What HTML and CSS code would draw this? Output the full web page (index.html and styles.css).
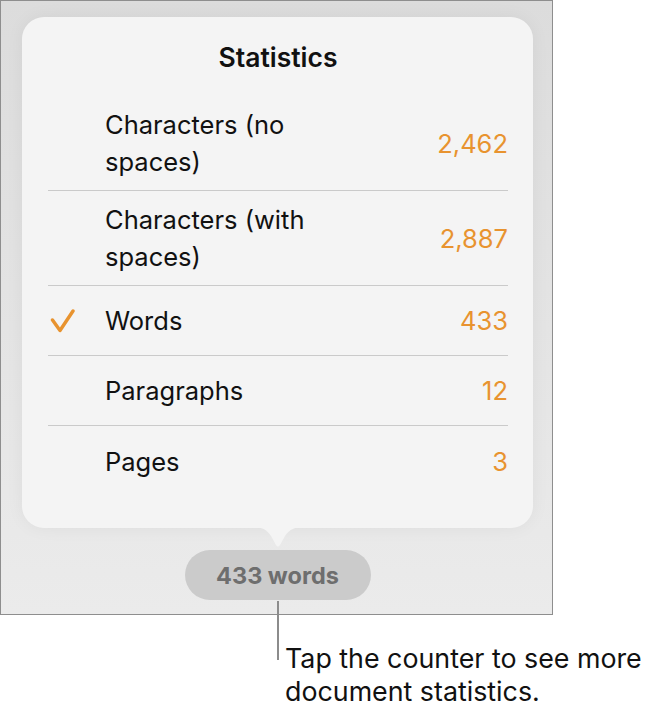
FILE: index.html
```html
<!DOCTYPE html>
<html>
<head>
<meta charset="utf-8">
<link rel="stylesheet" href="styles.css">
</head>
<body>
<div class="frame">
  <div class="card">
    <div class="title">Statistics</div>
    <div class="list">
      <div class="row"><div class="check"></div><div class="label">Characters (no spaces)</div><div class="value">2,462</div></div>
      <div class="row"><div class="check"></div><div class="label">Characters (with spaces)</div><div class="value">2,887</div></div>
      <div class="row"><div class="check"><svg width="26" height="26" viewBox="0 0 26 26"><path d="M3.5 12 L11 22.5 L24 3" fill="none" stroke="#e8932f" stroke-width="3.4" stroke-linecap="round" stroke-linejoin="round"/></svg></div><div class="label">Words</div><div class="value">433</div></div>
      <div class="row"><div class="check"></div><div class="label">Paragraphs</div><div class="value">12</div></div>
      <div class="row"><div class="check"></div><div class="label">Pages</div><div class="value">3</div></div>
    </div>
  </div>
  <svg class="arrow" width="56" height="21" viewBox="0 0 56 21"><path d="M0 0 C12 0 16 2 21 9 L26 18 Q28 21 30 18 L35 9 C40 2 44 0 56 0 Z" fill="#f4f4f4"/></svg>
  <div class="pill">433 words</div>
</div>
<div class="caption"><div class="cap-line">Tap the counter to see more</div><div class="cap-line">document statistics.</div></div>
</body>
</html>
```
FILE: styles.css
```css
html, body {
  margin: 0;
  padding: 0;
  background: #ffffff;
  font-family: "Inter", "Liberation Sans", sans-serif;
}
.frame {
  width: 553px;
  height: 615px;
  box-sizing: border-box;
  border: 1px solid #8e8e8e;
  background: linear-gradient(#dcdcdc, #ebebeb);
  padding: 16px 19px 0 21px;
  display: flex;
  flex-direction: column;
  align-items: center;
}
.card {
  width: 511px;
  height: 511px;
  box-sizing: border-box;
  background: #f4f4f4;
  border-radius: 22px;
  box-shadow: 0 0 18px rgba(0,0,0,0.05);
  padding: 24px 25px 0 26px;
  flex: none;
}
.title {
  text-align: center;
  font-size: 26.5px;
  font-weight: 600;
  line-height: 32px;
  color: #111;
  margin-bottom: 23px;
}
.row {
  display: flex;
  align-items: center;
  min-height: 70px;
  box-sizing: border-box;
  padding: 10px 0;
  border-bottom: 1px solid #cacaca;
  font-size: 25.5px;
  line-height: 37px;
  color: #111;
}
.row:last-child {
  border-bottom: none;
}
.check {
  width: 57px;
  flex: none;
  display: flex;
  align-items: center;
}
.check svg {
  display: block;
  margin-left: 1px;
}
.label {
  flex: none;
  width: 240px;
}
.value {
  flex: 1;
  text-align: right;
  color: #e8932f;
}
.arrow {
  display: block;
  margin-top: -1px;
  flex: none;
}
.pill {
  margin-top: 2px;
  width: 186px;
  height: 50px;
  border-radius: 25px;
  background: #cbcbcb;
  color: #6e6e6e;
  font-size: 23.5px;
  font-weight: 700;
  display: flex;
  align-items: center;
  justify-content: center;
  position: relative;
  flex: none;
}
.pill::after {
  content: "";
  position: absolute;
  left: 92px;
  top: 51px;
  width: 2px;
  height: 59px;
  background: #8c8c8c;
}
.caption {
  margin: 27px 0 0 285px;
  font-size: 26.8px;
  line-height: 33px;
  color: #111;
  white-space: nowrap;
}
```
